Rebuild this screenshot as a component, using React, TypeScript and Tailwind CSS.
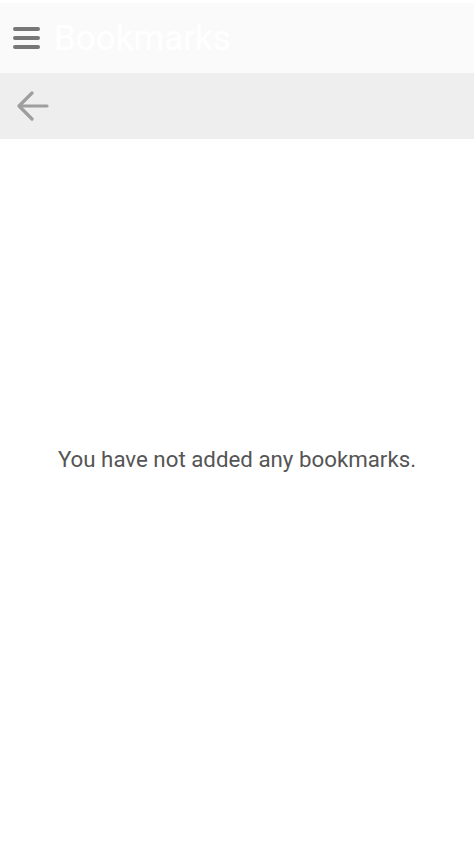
import React from "react";

export default function App() {
  return (
    <div className="w-[474px] h-[842px] bg-white flex flex-col" style={{ fontFamily: "Roboto, 'Noto Sans', sans-serif" }}>
      <header className="h-[73px] bg-[#fafafa] border-t-[3px] border-white flex items-center pl-[13px] shrink-0">
        <svg width="27" height="24" viewBox="0 0 27 24" className="shrink-0">
          <rect x="0" y="1" width="27" height="4" rx="2" fill="#777777" />
          <rect x="0" y="10" width="27" height="4" rx="2" fill="#777777" />
          <rect x="0" y="19" width="27" height="4" rx="2" fill="#777777" />
        </svg>
        <h1 className="ml-[14px] text-[35px] leading-none text-white">Bookmarks</h1>
      </header>
      <div className="h-[66px] bg-[#eeeeee] flex items-center pl-[17px] shrink-0">
        <svg width="32" height="30" viewBox="0 0 32 30" fill="none" stroke="#9e9e9e" strokeWidth="3.2" strokeLinecap="round" strokeLinejoin="round">
          <path d="M30 15H3" />
          <path d="M15 2L2 15l13 13" />
        </svg>
      </div>
      <main className="flex-1 flex flex-col items-center">
        <p className="mt-[305px] text-[22.3px] leading-[30px] text-[#555555]">You have not added any bookmarks.</p>
      </main>
    </div>
  );
}
